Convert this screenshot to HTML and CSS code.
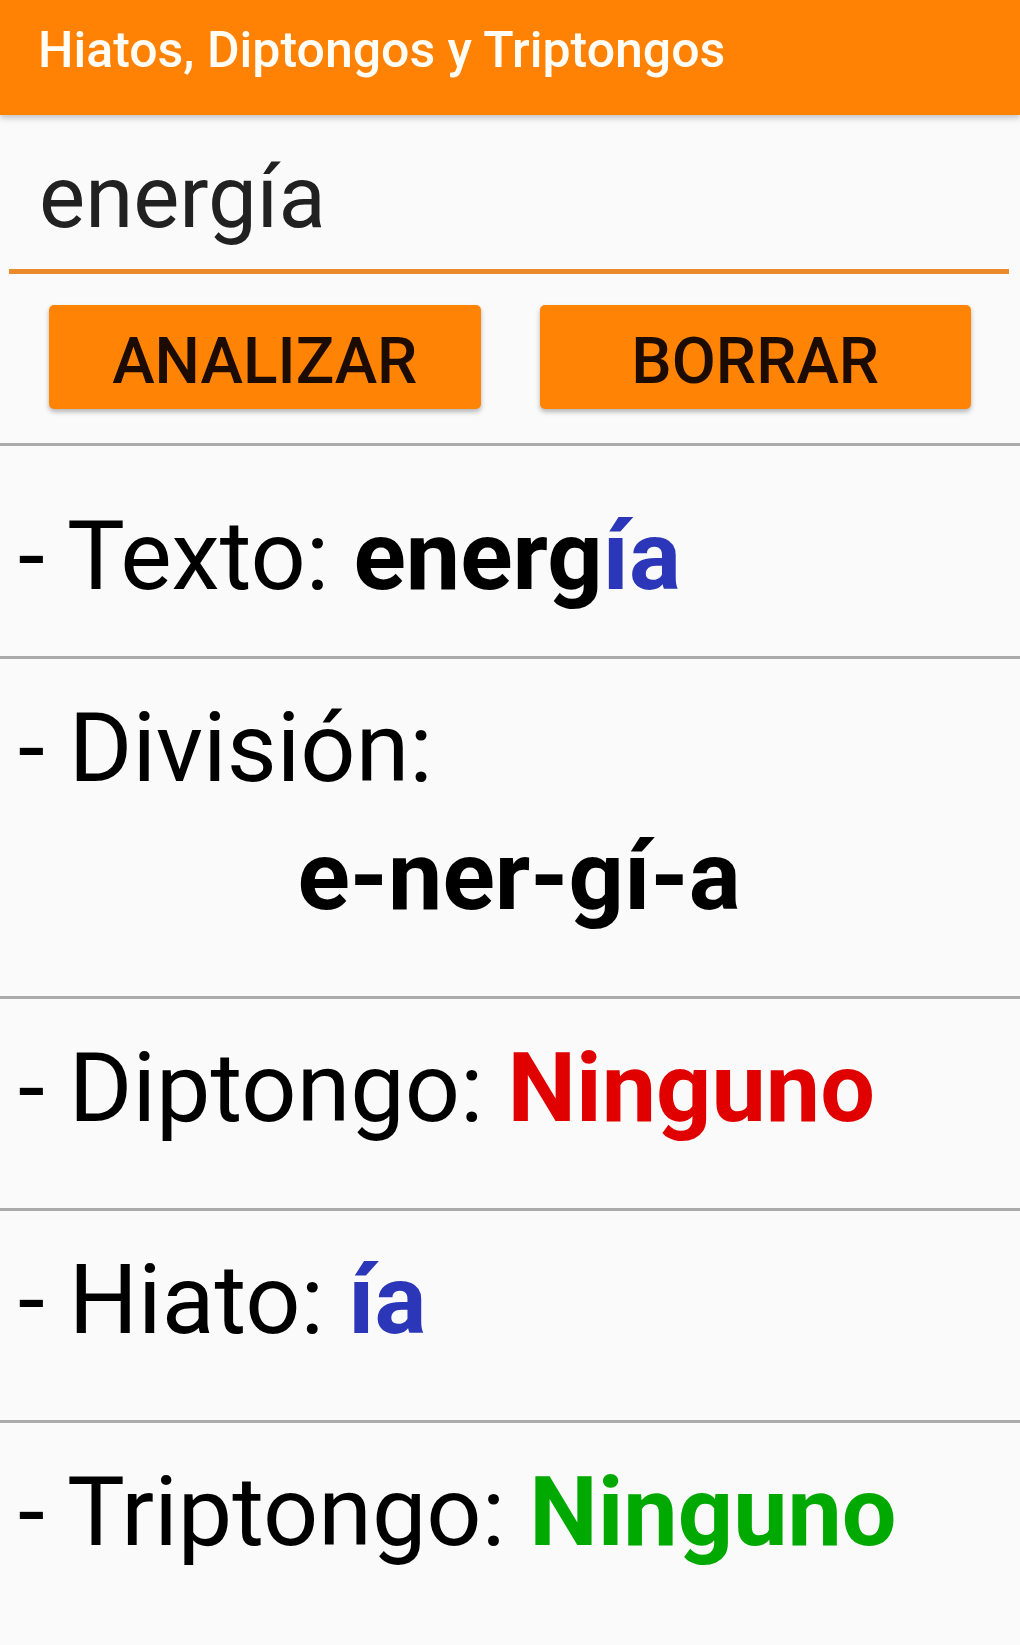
FILE: index.html
```html
<!DOCTYPE html>
<html lang="es">
<head>
<meta charset="utf-8">
<title>Hiatos, Diptongos y Triptongos</title>
<link rel="stylesheet" href="styles.css">
</head>
<body>
<header class="appbar">
  <h1 class="appbar-title">Hiatos, Diptongos y Triptongos</h1>
</header>
<main class="content">
  <div class="field">
    <span class="field-text">energía</span>
  </div>
  <div class="actions">
    <button class="btn" type="button">ANALIZAR</button>
    <button class="btn" type="button">BORRAR</button>
  </div>
  <section class="results">
    <div class="row row-first">
      <p class="line">- Texto: <b class="val">energ<span class="blue">ía</span></b></p>
    </div>
    <div class="row">
      <p class="line">- División:</p>
      <p class="line line-center"><b class="val">e-ner-gí-a</b></p>
    </div>
    <div class="row">
      <p class="line">- Diptongo: <b class="val red">Ninguno</b></p>
    </div>
    <div class="row">
      <p class="line">- Hiato: <b class="val blue">ía</b></p>
    </div>
    <div class="row row-last">
      <p class="line">- Triptongo: <b class="val green">Ninguno</b></p>
    </div>
  </section>
</main>
</body>
</html>
```

FILE: styles.css
```css
* {
  box-sizing: border-box;
}

html, body {
  margin: 0;
  padding: 0;
  background: #fafafa;
}

body {
  font-family: Roboto, "Noto Sans", "Liberation Sans", sans-serif;
  width: 1020px;
  min-height: 1645px;
  overflow: hidden;
}

.appbar {
  position: relative;
  z-index: 2;
  height: 115px;
  background: #ff8204;
  padding: 21px 0 0 38px;
  box-shadow: 0 3px 6px rgba(0, 0, 0, 0.22);
}

.appbar-title {
  margin: 0;
  font-size: 50px;
  font-weight: 500;
  line-height: normal;
  color: #fffdf6;
}

.content {
  display: flex;
  flex-direction: column;
}

.field {
  margin: 0 11px 0 9px;
  padding: 31px 0 21px 30px;
  border-bottom: 5px solid #e98a2c;
}

.field-text {
  display: block;
  font-size: 87px;
  line-height: normal;
  color: #212121;
}

.actions {
  display: flex;
  gap: 59px;
  padding: 0 49px;
  margin-top: 31px;
}

.btn {
  flex: 1;
  height: 104px;
  border: none;
  border-radius: 5px;
  background: #ff8305;
  box-shadow: 0 3px 5px rgba(0, 0, 0, 0.28);
  font-family: Roboto, "Noto Sans", "Liberation Sans", sans-serif;
  font-size: 64px;
  font-weight: 500;
  color: #1c0b00;
  padding: 8px 0 0 0;
  line-height: normal;
}

.results {
  margin-top: 34px;
}

.row {
  border-top: 3px solid #ababab;
  padding: 33px 0 64px 18px;
}

.row-first {
  padding-top: 54px;
  padding-bottom: 44px;
}

.row-last {
  padding-bottom: 100px;
}

.line {
  margin: 0;
  font-size: 97px;
  font-weight: 400;
  line-height: 112px;
  color: #000;
  white-space: nowrap;
}

.line-center {
  margin-top: 16px;
  text-align: center;
}

.val {
  font-weight: 700;
}

.blue {
  color: #2b37b8;
}

.red {
  color: #e00000;
}

.green {
  color: #00a900;
}
```
